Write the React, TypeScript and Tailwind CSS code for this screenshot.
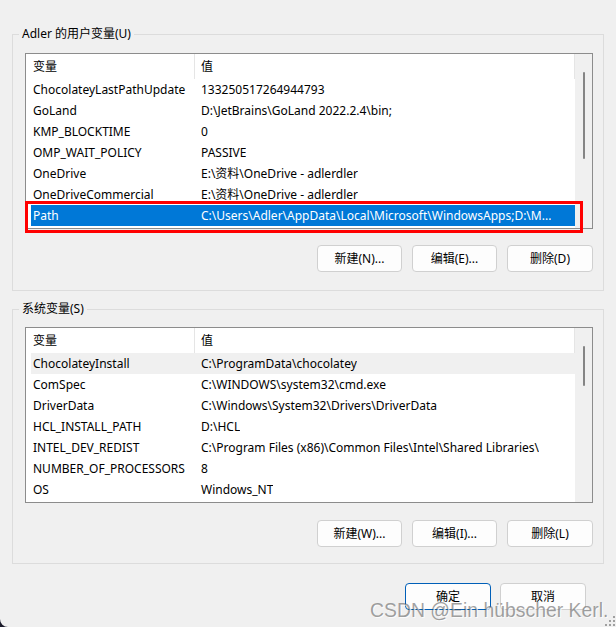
import React from "react";

type Row = { name: string; value: string; state?: "selected" | "hover" };

const userVars: Row[] = [
  { name: "ChocolateyLastPathUpdate", value: "133250517264944793" },
  { name: "GoLand", value: "D:\\JetBrains\\GoLand 2022.2.4\\bin;" },
  { name: "KMP_BLOCKTIME", value: "0" },
  { name: "OMP_WAIT_POLICY", value: "PASSIVE" },
  { name: "OneDrive", value: "E:\\资料\\OneDrive - adlerdler" },
  { name: "OneDriveCommercial", value: "E:\\资料\\OneDrive - adlerdler" },
  {
    name: "Path",
    value: "C:\\Users\\Adler\\AppData\\Local\\Microsoft\\WindowsApps;D:\\M...",
    state: "selected",
  },
];

const systemVars: Row[] = [
  { name: "ChocolateyInstall", value: "C:\\ProgramData\\chocolatey", state: "hover" },
  { name: "ComSpec", value: "C:\\WINDOWS\\system32\\cmd.exe" },
  { name: "DriverData", value: "C:\\Windows\\System32\\Drivers\\DriverData" },
  { name: "HCL_INSTALL_PATH", value: "D:\\HCL" },
  {
    name: "INTEL_DEV_REDIST",
    value: "C:\\Program Files (x86)\\Common Files\\Intel\\Shared Libraries\\",
  },
  { name: "NUMBER_OF_PROCESSORS", value: "8" },
  { name: "OS", value: "Windows_NT" },
];

const WinButton = ({
  label,
  primary,
  className = "",
}: {
  label: string;
  primary?: boolean;
  className?: string;
}) => (
  <button
    className={`h-[27px] rounded-[4px] bg-[#fdfdfd] text-[12px] text-black flex items-center justify-center ${
      primary ? "border border-[#005fb8]" : "border border-[#d0d0d0]"
    } ${className}`}
  >
    {label}
  </button>
);

const VarList = ({
  rows,
  thumbHeight,
  highlight,
}: {
  rows: Row[];
  thumbHeight: string;
  highlight?: boolean;
}) => (
  <div className="relative h-[176px] w-[568px] border border-[#8c8c8c] bg-white flex">
    <div className="flex-1 flex flex-col">
      {/* header */}
      <div className="h-[25px] flex items-stretch pl-[5px]">
        <div className="w-[164px] pl-[2px] flex items-center border-r border-[#e5e5e5]">
          变量
        </div>
        <div className="flex-1 pl-[6px] flex items-center border-r border-[#e5e5e5]">
          值
        </div>
      </div>
      <div className="flex flex-col pl-[5px]">
        {rows.map((r) => (
          <div
            key={r.name}
            className={`h-[21px] flex items-center whitespace-nowrap ${
              r.state === "selected"
                ? "bg-[#0078d7] text-white"
                : r.state === "hover"
                ? "bg-[#f0f0f0]"
                : ""
            }`}
          >
            <span className="w-[164px] pl-[2px] shrink-0">{r.name}</span>
            <span className="pl-[6px] overflow-hidden">{r.value}</span>
          </div>
        ))}
      </div>
    </div>
    {/* scrollbar */}
    <div className="w-[17px] bg-[#f0f0f0] flex justify-center pt-[18px]">
      <div className={`w-[2px] rounded-full bg-[#858585] ${thumbHeight}`} />
    </div>
    {highlight && (
      <div className="absolute left-[-1px] top-[147px] w-[558px] h-[32px] border-[3px] border-[#ff0000]" />
    )}
  </div>
);

export default function App() {
  return (
    <div
      className="relative w-[616px] h-[627px] overflow-hidden bg-[#f0f0f0] text-[12px] text-black pt-[26px]"
      style={{ fontFamily: '"Noto Sans", "Noto Sans CJK SC", sans-serif' }}
    >
      <fieldset className="ml-[12px] w-[592px] border border-[#dcdcdc] p-0">
        <legend className="ml-[6px] px-[3px] leading-[16px]">Adler 的用户变量(U)</legend>
        <div className="pl-[12px] pr-[10px] pb-[18px]">
          <div className="mt-[11px]">
            <VarList rows={userVars} thumbHeight="h-[87px]" highlight />
          </div>
          <div className="mt-[16px] flex justify-end gap-[10px]">
            <WinButton label="新建(N)..." className="w-[85px]" />
            <WinButton label="编辑(E)..." className="w-[85px]" />
            <WinButton label="删除(D)" className="w-[86px]" />
          </div>
        </div>
      </fieldset>

      <fieldset className="mt-[10px] ml-[12px] w-[592px] border border-[#dcdcdc] p-0">
        <legend className="ml-[6px] px-[3px] leading-[16px]">系统变量(S)</legend>
        <div className="pl-[12px] pr-[10px] pb-[16px]">
          <div className="mt-[10px]">
            <VarList rows={systemVars} thumbHeight="h-[40px]" />
          </div>
          <div className="mt-[17px] flex justify-end gap-[10px]">
            <WinButton label="新建(W)..." className="w-[85px]" />
            <WinButton label="编辑(I)..." className="w-[85px]" />
            <WinButton label="删除(L)" className="w-[86px]" />
          </div>
        </div>
      </fieldset>

      <div className="mt-[19px] pr-[30px] flex justify-end gap-[9px]">
        <WinButton label="确定" primary className="w-[86px]" />
        <WinButton label="取消" className="w-[86px]" />
      </div>

      {/* watermark */}
      <div
        className="absolute left-[370px] top-[598px] text-[19.4px] leading-[24px] text-[rgba(70,70,70,0.5)] whitespace-nowrap [text-shadow:1px_1px_0_rgba(255,255,255,0.8)]"
        style={{ fontFamily: '"Liberation Sans", Arial, sans-serif' }}
      >
        CSDN @Ein hübscher Kerl.
      </div>

      {/* resize grip */}
      <svg className="absolute right-0 bottom-0" width="12" height="12" viewBox="0 0 12 12">
        {[
          [9, 1],
          [9, 5],
          [5, 5],
          [9, 9],
          [5, 9],
          [1, 9],
        ].map(([x, y]) => (
          <rect key={`${x}-${y}`} x={x} y={y} width="2" height="2" fill="#a0a0a0" />
        ))}
      </svg>

      {/* window corner */}
      <svg className="absolute left-0 bottom-0" width="8" height="8" viewBox="0 0 8 8">
        <path d="M0 0 A8 8 0 0 0 8 8 L0 8 Z" fill="#1c1c2c" />
      </svg>
    </div>
  );
}
